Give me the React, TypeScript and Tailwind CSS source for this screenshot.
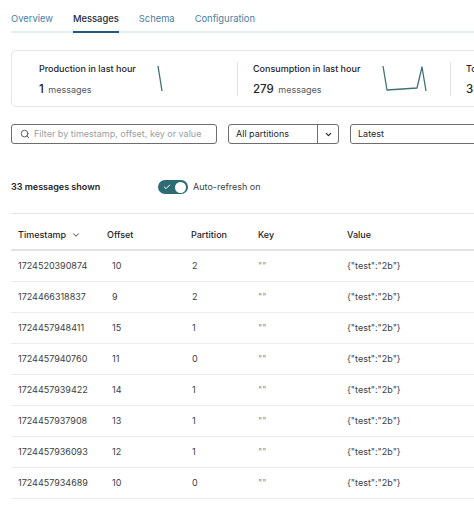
import { Search, ChevronDown, Check } from 'lucide-react';

interface MessageRow {
  timestamp: string;
  offset: number;
  partition: number;
}

const rows: MessageRow[] = [
  { timestamp: '1724520390874', offset: 10, partition: 2 },
  { timestamp: '1724466318837', offset: 9, partition: 2 },
  { timestamp: '1724457948411', offset: 15, partition: 1 },
  { timestamp: '1724457940760', offset: 11, partition: 0 },
  { timestamp: '1724457939422', offset: 14, partition: 1 },
  { timestamp: '1724457937908', offset: 13, partition: 1 },
  { timestamp: '1724457936093', offset: 12, partition: 1 },
  { timestamp: '1724457934689', offset: 10, partition: 0 },
];

const tabs = ['Overview', 'Messages', 'Schema', 'Configuration'];

function Sparkline({ points }: { points: string }) {
  return (
    <svg width="60" height="30" viewBox="0 0 60 30" className="shrink-0">
      <polyline points={points} fill="none" stroke="#3f7276" strokeWidth="1.3" strokeLinejoin="round" />
    </svg>
  );
}

export default function App() {
  return (
    <div
      className="w-[474px] h-[506px] overflow-hidden bg-white text-[#1f2328]"
      style={{ fontFamily: 'Inter, "Noto Sans", sans-serif' }}
    >
      <div className="w-[640px] pl-[11px]">
        {/* tabs */}
        <div className="flex gap-[20px] border-b-2 border-[#e6eef5] text-[9.4px] leading-[14px]">
          {tabs.map((tab) => (
            <div
              key={tab}
              className={`pt-[12px] pb-[5px] -mb-[2px] border-b-2 ${
                tab === 'Messages'
                  ? 'border-[#245a7d] text-[#1e2b3a] font-medium'
                  : 'border-transparent text-[#4a7ea3]'
              }`}
            >
              {tab}
            </div>
          ))}
        </div>

        {/* stats card */}
        <div className="mt-[17px] h-[57px] flex items-center pl-[12px] border border-[#e6e6e6] rounded-[5px]">
          <div className="w-[213px] h-[34px] flex items-center pl-[15px]">
            <div className="w-[118px] pt-[2px]">
              <div className="text-[9px] leading-[13px] font-medium">Production in last hour</div>
              <div className="mt-[5px] leading-[14px]">
                <span className="text-[11.5px] font-medium">1</span>{' '}
                <span className="text-[9px] text-[#555b61]">messages</span>
              </div>
            </div>
            <Sparkline points="1,2 5,27" />
          </div>
          <div className="w-[213px] h-[34px] flex items-center pl-[15px] border-l border-[#e3e3e3]">
            <div className="w-[129px] pt-[2px]">
              <div className="text-[9px] leading-[13px] font-medium">Consumption in last hour</div>
              <div className="mt-[5px] leading-[14px]">
                <span className="text-[11.5px] font-medium">279</span>{' '}
                <span className="text-[9px] text-[#555b61]">messages</span>
              </div>
            </div>
            <Sparkline points="1,2 5,26 35,24 40,3 44,27" />
          </div>
          <div className="w-[160px] h-[34px] flex items-center pl-[15px] border-l border-[#e3e3e3]">
            <div className="pt-[2px]">
              <div className="text-[9px] leading-[13px] font-medium">Total messages</div>
              <div className="mt-[5px] leading-[14px]">
                <span className="text-[11.5px] font-medium">33</span>{' '}
                <span className="text-[9px] text-[#555b61]">messages</span>
              </div>
            </div>
          </div>
        </div>

        {/* filters */}
        <div className="mt-[17px] flex gap-[11px] h-[20px] text-[9px]">
          <div className="w-[206px] flex items-center gap-[4px] pl-[8px] border border-[#6e6e6e] rounded-[3px]">
            <Search size={10} strokeWidth={2.2} className="text-[#555]" />
            <span className="text-[#9a9ea3]">Filter by timestamp, offset, key or value</span>
          </div>
          <div className="w-[111px] flex border border-[#6e6e6e] rounded-[3px]">
            <div className="flex-1 flex items-center pl-[7px]">All partitions</div>
            <div className="w-[21px] flex items-center justify-center border-l border-[#6e6e6e]">
              <ChevronDown size={9} strokeWidth={3} />
            </div>
          </div>
          <div className="w-[200px] flex items-center pl-[7px] border border-[#6e6e6e] rounded-[3px]">
            Latest
          </div>
        </div>

        {/* count + auto-refresh */}
        <div className="mt-[36px] h-[14px] flex items-center text-[9px]">
          <div className="w-[147px] font-semibold">33 messages shown</div>
          <div className="w-[30px] h-[14px] rounded-full bg-[#2e6a71] flex items-center justify-between px-[2px]">
            <Check size={8} strokeWidth={3} className="text-white ml-[3px]" />
            <span className="w-[11px] h-[11px] rounded-full bg-white" />
          </div>
          <span className="ml-[5px] text-[#3a3f45]">Auto-refresh on</span>
        </div>

        <div className="mt-[19px] border-t border-[#e8e8e8]" />

        {/* table */}
        <div className="text-[9px] leading-[14px]">
          <div className="flex pt-[14px] pb-[7px] border-b-2 border-[#e3e3e3] font-medium">
            <div className="w-[89px] pl-[7px] flex items-center gap-[5px]">
              Timestamp
              <ChevronDown size={10} strokeWidth={2} />
            </div>
            <div className="w-[84px] pl-[7px]">Offset</div>
            <div className="w-[67px] pl-[7px]">Partition</div>
            <div className="w-[89px] pl-[7px]">Key</div>
            <div className="flex-1 pl-[7px]">Value</div>
          </div>
          {rows.map((row) => (
            <div key={row.timestamp} className="flex items-center h-[31px] border-b border-[#ececec] text-[#3b4046]">
              <div className="w-[89px] pl-[7px]">{row.timestamp}</div>
              <div className="w-[84px] pl-[12px]">{row.offset}</div>
              <div className="w-[67px] pl-[8px]">{row.partition}</div>
              <div className="w-[89px] pl-[7px] text-[#8a8f94]">""</div>
              <div className="flex-1 pl-[7px]">{'{"test":"2b"}'}</div>
            </div>
          ))}
        </div>
      </div>
    </div>
  );
}
